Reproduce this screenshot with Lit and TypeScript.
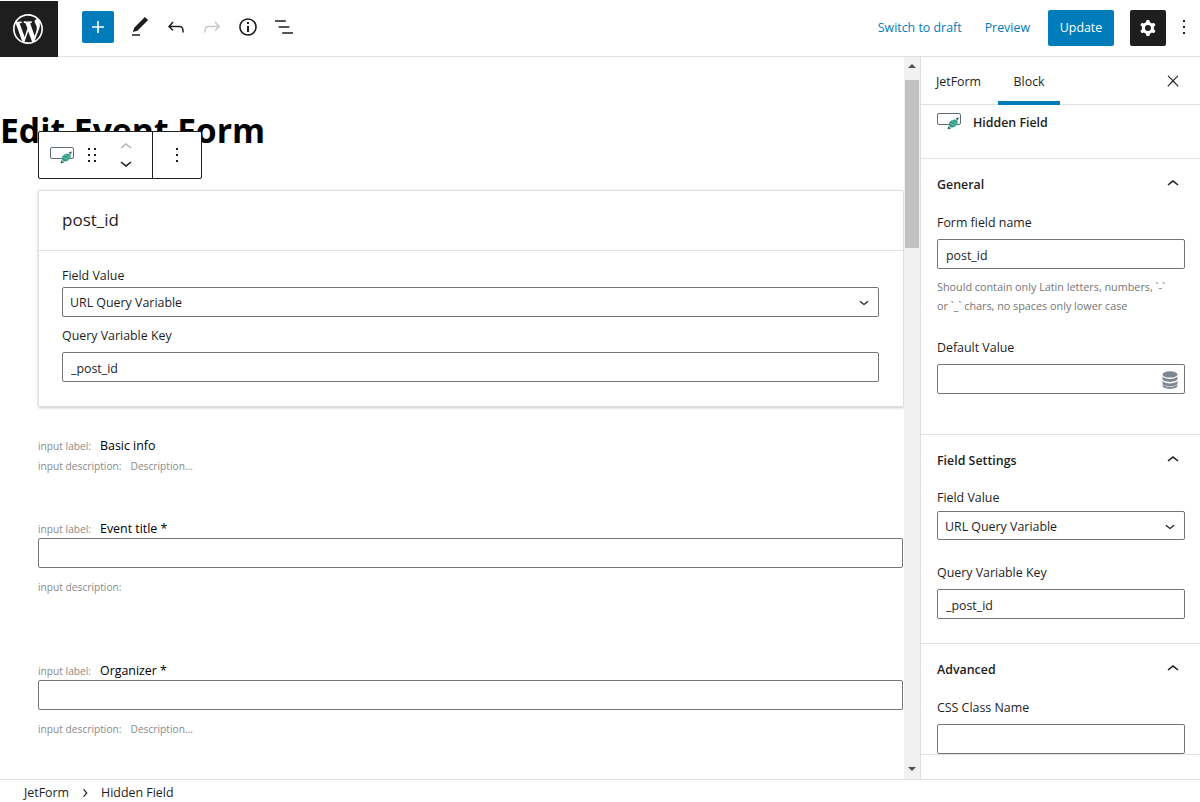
import { LitElement, html, css, svg } from 'lit';
import { customElement } from 'lit/decorators.js';

const P = {
  plus: 'M18 11.2h-5.2V6h-1.6v5.2H6v1.6h5.2V18h1.6v-5.2H18z',
  pencil: 'M20.1 5.1L16.9 2 6.2 12.7l-1.3 4.4 4.5-1.3L20.1 5.1zM4 20.8h8v-1.5H4v1.5z',
  undo: 'M18.3 11.7c-.6-.6-1.4-.9-2.3-.9H6.7l2.9-3.3-1.1-1-4.5 5L8.5 16l1-1-2.7-2.7H16c.5 0 .9.2 1.3.5 1 1 1 3.4 1 4.5v.3h1.5v-.2c0-1.5 0-4.3-1.5-5.7z',
  redo: 'M15.6 6.5l-1.1 1 2.9 3.3H8c-.9 0-1.7.3-2.3.9-1.4 1.5-1.4 4.2-1.4 5.6v.2h1.5v-.3c0-1.1 0-3.5 1-4.5.3-.3.7-.5 1.3-.5h9.2L14.5 15l1.1 1.1 4.6-4.6-4.6-5z',
  info: 'M12 3.2c-4.8 0-8.8 3.9-8.8 8.8 0 4.8 3.9 8.8 8.8 8.8 4.8 0 8.8-3.9 8.8-8.8 0-4.8-4-8.8-8.8-8.8zm0 16c-4 0-7.2-3.3-7.2-7.2C4.8 8 8 4.8 12 4.8s7.2 3.3 7.2 7.2c0 4-3.2 7.2-7.2 7.2zM11 17h2v-6h-2v6zm0-8h2V7h-2v2z',
  list: 'M13.8 5.2H3v1.5h10.8V5.2zm-3.6 12v1.5H21v-1.5H10.2zm7.2-6H6.6v1.5h10.8v-1.5z',
  cog: 'M10.289 4.836A1 1 0 0111.275 4h1.306a1 1 0 01.987.836l.244 1.466c.787.26 1.503.679 2.108 1.218l1.393-.522a1 1 0 011.216.437l.653 1.13a1 1 0 01-.23 1.273l-1.148.944a6.025 6.025 0 010 2.435l1.149.946a1 1 0 01.23 1.272l-.653 1.13a1 1 0 01-1.216.437l-1.394-.522c-.605.54-1.32.958-2.108 1.218l-.244 1.466a1 1 0 01-.987.836h-1.306a1 1 0 01-.986-.836l-.244-1.466a5.995 5.995 0 01-2.108-1.218l-1.394.522a1 1 0 01-1.217-.436l-.653-1.131a1 1 0 01.23-1.272l1.149-.946a6.026 6.026 0 010-2.435l-1.148-.944a1 1 0 01-.23-1.272l.653-1.131a1 1 0 011.217-.437l1.393.522a5.994 5.994 0 012.108-1.218l.244-1.466zM14.929 12a3 3 0 11-6 0 3 3 0 016 0z',
  more: 'M13 19h-2v-2h2v2zm0-6h-2v-2h2v2zm0-6h-2V5h2v2z',
  close: 'M13 11.8l6.1-6.3-1-1-6.1 6.2-6.1-6.2-1 1 6.1 6.3-6.5 6.7 1 1 6.5-6.6 6.5 6.6 1-1z',
  up: 'M6.5 12.4L12 8l5.5 4.4-.9 1.2L12 10l-4.5 3.6-1-1.2z',
  down: 'M17.5 11.6L12 16l-5.5-4.4.9-1.2L12 14l4.5-3.6 1 1.2z',
  drag: 'M8 7h2V5H8v2zm0 6h2v-2H8v2zm0 6h2v-2H8v2zm6-14v2h2V5h-2zm0 8h2v-2h-2v2zm0 6h2v-2h-2v2z',
  right: 'M10.6 6L9.2 7.2l4.2 4.8-4.2 4.8 1.4 1.2 5.2-6z',
};

const WP = 'M20 10c0-5.51-4.49-10-10-10C4.48 0 0 4.49 0 10c0 5.52 4.48 10 10 10 5.51 0 10-4.48 10-10zM7.78 15.37L4.37 6.22c.55-.02 1.17-.08 1.17-.08.5-.06.44-1.13-.06-1.11 0 0-1.45.11-2.37.11-.18 0-.37 0-.58-.01C4.12 2.69 6.87 1.11 10 1.11c2.33 0 4.45.87 6.05 2.34-.68-.11-1.65.39-1.65 1.58 0 .74.45 1.36.9 2.1.35.61.55 1.36.55 2.46 0 1.49-1.4 5-1.4 5l-3.03-8.37c.54-.02.82-.17.82-.17.5-.05.44-1.25-.06-1.22 0 0-1.44.12-2.38.12-.87 0-2.33-.12-2.33-.12-.5-.03-.56 1.2-.06 1.22l.92.08 1.26 3.41zM17.41 10c.24-.64.74-1.87.43-4.25.7 1.29 1.05 2.71 1.05 4.25 0 3.29-1.73 6.24-4.4 7.78.97-2.59 1.94-5.2 2.92-7.78zM6.1 18.09C3.12 16.65 1.11 13.53 1.11 10c0-1.3.23-2.48.72-3.59C3.25 10.3 4.67 14.2 6.1 18.09zm4.03-6.63l2.58 6.98c-.86.29-1.76.45-2.71.45-.79 0-1.57-.11-2.29-.33.81-2.38 1.62-4.74 2.42-7.1z';

const icon = (d: string, size = 24) =>
  html`<svg width=${size} height=${size} viewBox="0 0 24 24" fill="currentColor"><path fill-rule="evenodd" d=${d}></path></svg>`;

// outlined field with the little green turtle over its corner
const hiddenIcon = () => html`<svg width="24" height="18" viewBox="0 0 24 18">
  <rect x=".5" y="1.5" width="23" height="11" rx="1.5" fill="#fff" stroke="#5f6b76"></rect>
  ${svg`<ellipse cx="16.3" cy="11.5" rx="4.6" ry="3.4" transform="rotate(-32 16.3 11.5)" fill="#2f9a85"></ellipse>
  <path d="M10.5 17.6l1-3.6 2.6 2.4zM22 5.4l-3.4.8 2 2.6z" fill="#236f66"></path>
  <path d="M13 11.5l5.5 2M15 8.6l5 3.2" stroke="#8fd4c4" stroke-width=".7"></path>`}
</svg>`;

const dbIcon = () => html`<svg width="16" height="18" viewBox="0 0 16 18" fill="#7d8790">
  <ellipse cx="8" cy="3.4" rx="7.5" ry="3.2"></ellipse>
  <path d="M.5 5.4v2.4C.5 9.5 3.9 10.9 8 10.9s7.5-1.4 7.5-3.1V5.4C14 7 11.2 7.9 8 7.9S2 7 .5 5.4z"></path>
  <path d="M.5 10v2.3C.5 14 3.9 15.4 8 15.4s7.5-1.4 7.5-3.1V10c-1.5 1.6-4.3 2.5-7.5 2.5S2 11.6.5 10z"></path>
  <path d="M.5 13.6v1.2C.5 16.5 3.9 17.9 8 17.9s7.5-1.4 7.5-3.1v-1.2c-1.5 1.5-4.3 2.4-7.5 2.4s-6-.9-7.5-2.4z"></path>
</svg>`;

@customElement('app-root')
export default class AppRoot extends LitElement {
  static override styles = css`
    :host {
      display: flex;
      flex-direction: column;
      height: 802px;
      overflow: hidden;
      background: #fff;
      color: #1e1e1e;
      font-family: 'Open Sans', 'Noto Sans', sans-serif;
      font-size: 12.4px;
      line-height: 18px;
    }
    svg { display: block; flex: none; }
    input {
      display: block;
      box-sizing: border-box;
      width: 100%;
      height: 30px;
      margin: 0;
      padding: 2px 8px 0;
      border: 1px solid #757575;
      border-radius: 2px;
      background: #fff;
      color: #1e1e1e;
      font: inherit;
      outline: none;
    }

    /* top bar */
    .header {
      display: flex;
      align-items: center;
      flex: none;
      height: 56px;
      border-bottom: 1px solid #e0e0e0;
    }
    .logo {
      display: flex;
      align-items: center;
      justify-content: center;
      width: 58px;
      height: 56px;
      margin-bottom: -1px;
      padding-right: 2px;
      box-sizing: border-box;
      background: #1e1e1e;
      color: #fff;
    }
    .add {
      display: flex;
      align-items: center;
      justify-content: center;
      width: 32px;
      height: 32px;
      margin: -2px 8px 0 24px;
      border-radius: 2px;
      background: #007cba;
      color: #fff;
    }
    .tool {
      display: flex;
      align-items: center;
      justify-content: center;
      width: 36px;
      height: 36px;
      margin-top: -3px;
    }
    .tool.off { color: #c8c8c8; }
    .spacer { flex: 1; }
    .link { color: #007cba; }
    .link.draft { margin-right: 23px; }
    .update {
      display: flex;
      align-items: center;
      justify-content: center;
      width: 66px;
      height: 36px;
      margin: -1px 16px 0 18px;
      border-radius: 2px;
      background: #007cba;
      color: #fff;
    }
    .gear {
      display: flex;
      align-items: center;
      justify-content: center;
      width: 36px;
      height: 36px;
      margin-top: -1px;
      border-radius: 2px;
      background: #1e1e1e;
      color: #fff;
    }
    .dots { width: 24px; margin: -3px 4px 0 6px; }

    /* middle */
    .main { display: flex; flex: 1; min-height: 0; }
    .canvas {
      position: relative;
      flex: 1;
      min-width: 0;
      overflow: hidden;
    }
    h1 {
      margin: 53px 0 40px;
      font-size: 33.7px;
      line-height: 40px;
      font-weight: 700;
      color: #000;
      white-space: nowrap;
    }
    .block-toolbar {
      position: absolute;
      top: 74px;
      left: 38px;
      display: flex;
      align-items: center;
      box-sizing: border-box;
      width: 164px;
      height: 48px;
      border: 1px solid #1e1e1e;
      border-radius: 2px;
      background: #fff;
    }
    .tb-type { margin-left: 11px; }
    .tb-drag { margin-left: 6px; }
    .tb-move { display: flex; flex-direction: column; margin-left: 10px; }
    .tb-move span { display: block; height: 16px; }
    .tb-move svg { margin-top: -4px; }
    .tb-move .dim { color: #b4b4b4; }
    .tb-more {
      display: flex;
      align-items: center;
      justify-content: center;
      height: 100%;
      margin-left: auto;
      width: 48px;
      border-left: 1px solid #1e1e1e;
    }
    .card {
      margin-left: 38px;
      box-sizing: border-box;
      width: 866px;
      height: 217px;
      border: 1px solid #e0e0e0;
      border-radius: 2px;
      box-shadow: 0 1px 3px rgba(0, 0, 0, .22);
    }
    .card-head {
      height: 59px;
      padding-left: 23px;
      border-bottom: 1px solid #e0e0e0;
      font-size: 17px;
      line-height: 57px;
    }
    .card-body { padding: 16px 24px 0 23px; }
    .card-body .label { margin-bottom: 2px; }
    .card-body .label.second { margin-top: 10px; margin-bottom: 7px; }
    .select {
      display: flex;
      align-items: center;
      justify-content: space-between;
      box-sizing: border-box;
      height: 30px;
      padding: 2px 4px 0 7px;
      border: 1px solid #757575;
      border-radius: 2px;
    }
    .select svg { margin-top: -2px; }
    .row { margin: 0 1px 45px 38px; }
    .row.first { margin-top: 30px; }
    .row.gap { margin-bottom: 66px; }
    .pair {
      display: flex;
      align-items: center;
      height: 18px;
      gap: 9px;
      color: #8a8a8a;
      font-size: 10.2px;
    }
    .pair b { font-weight: 400; color: #000; font-size: 12.4px; }
    .pair i { font-style: normal; color: #8a8a8a; }
    .pair.desc { margin-top: 2px; }
    .row input + .pair { margin-top: 10px; }

    /* scrollbar */
    .scroll {
      display: flex;
      flex-direction: column;
      align-items: center;
      flex: none;
      width: 16px;
      background: #f1f1f1;
    }
    .scroll .thumb {
      width: 14px;
      height: 168px;
      margin-top: 12px;
      background: #c1c1c1;
    }
    .arrow-up, .arrow-down {
      width: 0;
      height: 0;
      border-left: 4px solid transparent;
      border-right: 4px solid transparent;
    }
    .arrow-up { margin-top: 7px; border-bottom: 4px solid #505050; }
    .arrow-down { margin: auto 0 8px; border-top: 4px solid #505050; }

    /* sidebar */
    .side {
      display: flex;
      flex-direction: column;
      flex: none;
      box-sizing: border-box;
      width: 280px;
      overflow: hidden;
      border-left: 1px solid #e0e0e0;
    }
    .tabs {
      display: flex;
      align-items: stretch;
      flex: none;
      height: 47px;
      border-bottom: 1px solid #e0e0e0;
    }
    .tab { display: flex; align-items: center; padding: 2px 17px 0 15px; }
    .tab.on { position: relative; padding: 2px 15.5px 0; }
    .tab.on::after {
      content: '';
      position: absolute;
      left: 0;
      right: 0;
      bottom: -1px;
      height: 4px;
      background: #007cba;
    }
    .tab-close { margin: 0 18px 0 auto; align-self: center; }
    .kind {
      display: flex;
      align-items: flex-start;
      flex: none;
      gap: 12px;
      height: 53px;
      padding-left: 16px;
      border-bottom: 1px solid #e0e0e0;
      font-weight: 600;
    }
    .kind svg { margin-top: 7px; }
    .kind span { margin-top: 9px; }
    .panel {
      flex: none;
      padding: 17px 15px 0 16px;
      border-bottom: 1px solid #e0e0e0;
    }
    .panel-title {
      display: flex;
      align-items: center;
      justify-content: space-between;
      height: 18px;
      margin-bottom: 20px;
      font-weight: 600;
    }
    .panel-title svg { margin-top: -2px; }
    .label { height: 18px; }
    .panel .label { margin-bottom: 7px; }
    .panel .select { height: 29px; margin-top: -3px; }
    .help {
      margin: 8px 0 24px;
      color: #757575;
      font-size: 10.8px;
      line-height: 19px;
    }
    .after { margin-top: 24px; }
    .with-db { position: relative; }
    .with-db svg { position: absolute; right: 7px; top: 7px; }
    .general { height: 258px; }
    .settings { height: 191px; }
    .settings .panel-title { margin-bottom: 19px; }

    /* footer */
    .footer {
      display: flex;
      align-items: center;
      flex: none;
      box-sizing: border-box;
      height: 23px;
      padding: 3px 0 0 24px;
      border-top: 1px solid #e0e0e0;
    }
    .footer svg { margin: 0 8px; }
  `;

  override render() {
    return html`
      <div class="header">
        <div class="logo">
          <svg width="30" height="30" viewBox="0 0 20 20" fill="currentColor"><path d=${WP}></path></svg>
        </div>
        <div class="add">${icon(P.plus)}</div>
        <div class="tool">${icon(P.pencil)}</div>
        <div class="tool">${icon(P.undo)}</div>
        <div class="tool off">${icon(P.redo)}</div>
        <div class="tool">${icon(P.info)}</div>
        <div class="tool">${icon(P.list)}</div>
        <div class="spacer"></div>
        <span class="link draft">Switch to draft</span>
        <span class="link">Preview</span>
        <div class="update">Update</div>
        <div class="gear">${icon(P.cog)}</div>
        <div class="dots">${icon(P.more)}</div>
      </div>

      <div class="main">
        <div class="canvas">
          <h1>Edit Event Form</h1>
          <div class="block-toolbar">
            <div class="tb-type">${hiddenIcon()}</div>
            <div class="tb-drag">${icon(P.drag)}</div>
            <div class="tb-move">
              <span class="dim">${icon(P.up)}</span>
              <span>${icon(P.down)}</span>
            </div>
            <div class="tb-more">${icon(P.more)}</div>
          </div>

          <div class="card">
            <div class="card-head">post_id</div>
            <div class="card-body">
              <div class="label">Field Value</div>
              <div class="select">URL Query Variable ${icon(P.down, 20)}</div>
              <div class="label second">Query Variable Key</div>
              <input .value=${'_post_id'} />
            </div>
          </div>

          <div class="row first">
            <div class="pair">input label: <b>Basic info</b></div>
            <div class="pair desc">input description: <i>Description...</i></div>
          </div>
          <div class="row gap">
            <div class="pair">input label: <b>Event title *</b></div>
            <input />
            <div class="pair">input description:</div>
          </div>
          <div class="row">
            <div class="pair">input label: <b>Organizer *</b></div>
            <input />
            <div class="pair">input description: <i>Description...</i></div>
          </div>
        </div>

        <div class="scroll">
          <div class="arrow-up"></div>
          <div class="thumb"></div>
          <div class="arrow-down"></div>
        </div>

        <div class="side">
          <div class="tabs">
            <div class="tab">JetForm</div>
            <div class="tab on">Block</div>
            <div class="tab-close">${icon(P.close, 18)}</div>
          </div>
          <div class="kind">${hiddenIcon()}<span>Hidden Field</span></div>

          <div class="panel general">
            <div class="panel-title">General ${icon(P.up)}</div>
            <div class="label">Form field name</div>
            <input .value=${'post_id'} />
            <div class="help">Should contain only Latin letters, numbers, \`-\`<br />or \`_\` chars, no spaces only lower case</div>
            <div class="label">Default Value</div>
            <div class="with-db"><input />${dbIcon()}</div>
          </div>

          <div class="panel settings">
            <div class="panel-title">Field Settings ${icon(P.up)}</div>
            <div class="label">Field Value</div>
            <div class="select">URL Query Variable ${icon(P.down, 20)}</div>
            <div class="label after">Query Variable Key</div>
            <input .value=${'_post_id'} />
          </div>

          <div class="panel">
            <div class="panel-title">Advanced ${icon(P.up)}</div>
            <div class="label">CSS Class Name</div>
            <input />
          </div>
        </div>
      </div>

      <div class="footer">
        <span>JetForm</span>
        ${icon(P.right, 16)}
        <span>Hidden Field</span>
      </div>
    `;
  }
}
